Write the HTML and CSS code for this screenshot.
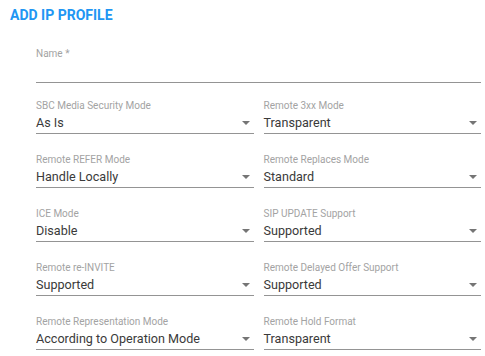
FILE: index.html
```html
<!DOCTYPE html>
<html lang="en">
<head>
    <meta charset="UTF-8">
    <title>Add IP Profile</title>
    <link rel="stylesheet" href="styles.css">
</head>
<body>
<h1 class="title">ADD IP PROFILE</h1>

<form class="profile">
    <div class="field name">
        <label class="label">Name *</label>
        <div class="input"></div>
    </div>

    <div class="fields">
        <div class="field">
            <label class="label">SBC Media Security Mode</label>
            <div class="select"><span class="value">As Is</span><span class="arrow"></span></div>
        </div>
        <div class="field">
            <label class="label">Remote 3xx Mode</label>
            <div class="select"><span class="value">Transparent</span><span class="arrow"></span></div>
        </div>
        <div class="field">
            <label class="label">Remote REFER Mode</label>
            <div class="select"><span class="value">Handle Locally</span><span class="arrow"></span></div>
        </div>
        <div class="field">
            <label class="label">Remote Replaces Mode</label>
            <div class="select"><span class="value">Standard</span><span class="arrow"></span></div>
        </div>
        <div class="field">
            <label class="label">ICE Mode</label>
            <div class="select"><span class="value">Disable</span><span class="arrow"></span></div>
        </div>
        <div class="field">
            <label class="label">SIP UPDATE Support</label>
            <div class="select"><span class="value">Supported</span><span class="arrow"></span></div>
        </div>
        <div class="field">
            <label class="label">Remote re-INVITE</label>
            <div class="select"><span class="value">Supported</span><span class="arrow"></span></div>
        </div>
        <div class="field">
            <label class="label">Remote Delayed Offer Support</label>
            <div class="select"><span class="value">Supported</span><span class="arrow"></span></div>
        </div>
        <div class="field">
            <label class="label">Remote Representation Mode</label>
            <div class="select"><span class="value">According to Operation Mode</span><span class="arrow"></span></div>
        </div>
        <div class="field">
            <label class="label">Remote Hold Format</label>
            <div class="select"><span class="value">Transparent</span><span class="arrow"></span></div>
        </div>
    </div>
</form>
</body>
</html>
```

FILE: styles.css
```css
body {
    margin: 0;
    font-family: Roboto, "Liberation Sans", Arial, sans-serif;
    background: #fff;
    width: 485px;
    height: 356px;
    overflow: hidden;
}
.title {
    margin: 0;
    padding: 7px 0 0 10px;
    font-size: 14px;
    line-height: 16px;
    font-weight: bold;
    color: #2196f3;
}
.profile {
    margin: 25px 4px 0 36px;
}
.label {
    display: block;
    font-size: 10px;
    line-height: 12px;
    color: #a3a3a3;
}
.input {
    height: 22px;
    border-bottom: 1px solid #949494;
}
.field.name {
    margin-bottom: 17px;
}
.fields {
    display: grid;
    grid-template-columns: 1fr 1fr;
    column-gap: 10px;
    row-gap: 20px;
}
.select {
    display: flex;
    align-items: center;
    margin-top: 3px;
    padding-bottom: 2px;
    border-bottom: 1px solid #949494;
}
.value {
    flex: 1;
    font-size: 12.6px;
    line-height: 16px;
    color: #3a3a3a;
}
.arrow {
    width: 0;
    height: 0;
    margin-right: 4px;
    border-left: 4.5px solid transparent;
    border-right: 4.5px solid transparent;
    border-top: 4.5px solid #757575;
}
```
